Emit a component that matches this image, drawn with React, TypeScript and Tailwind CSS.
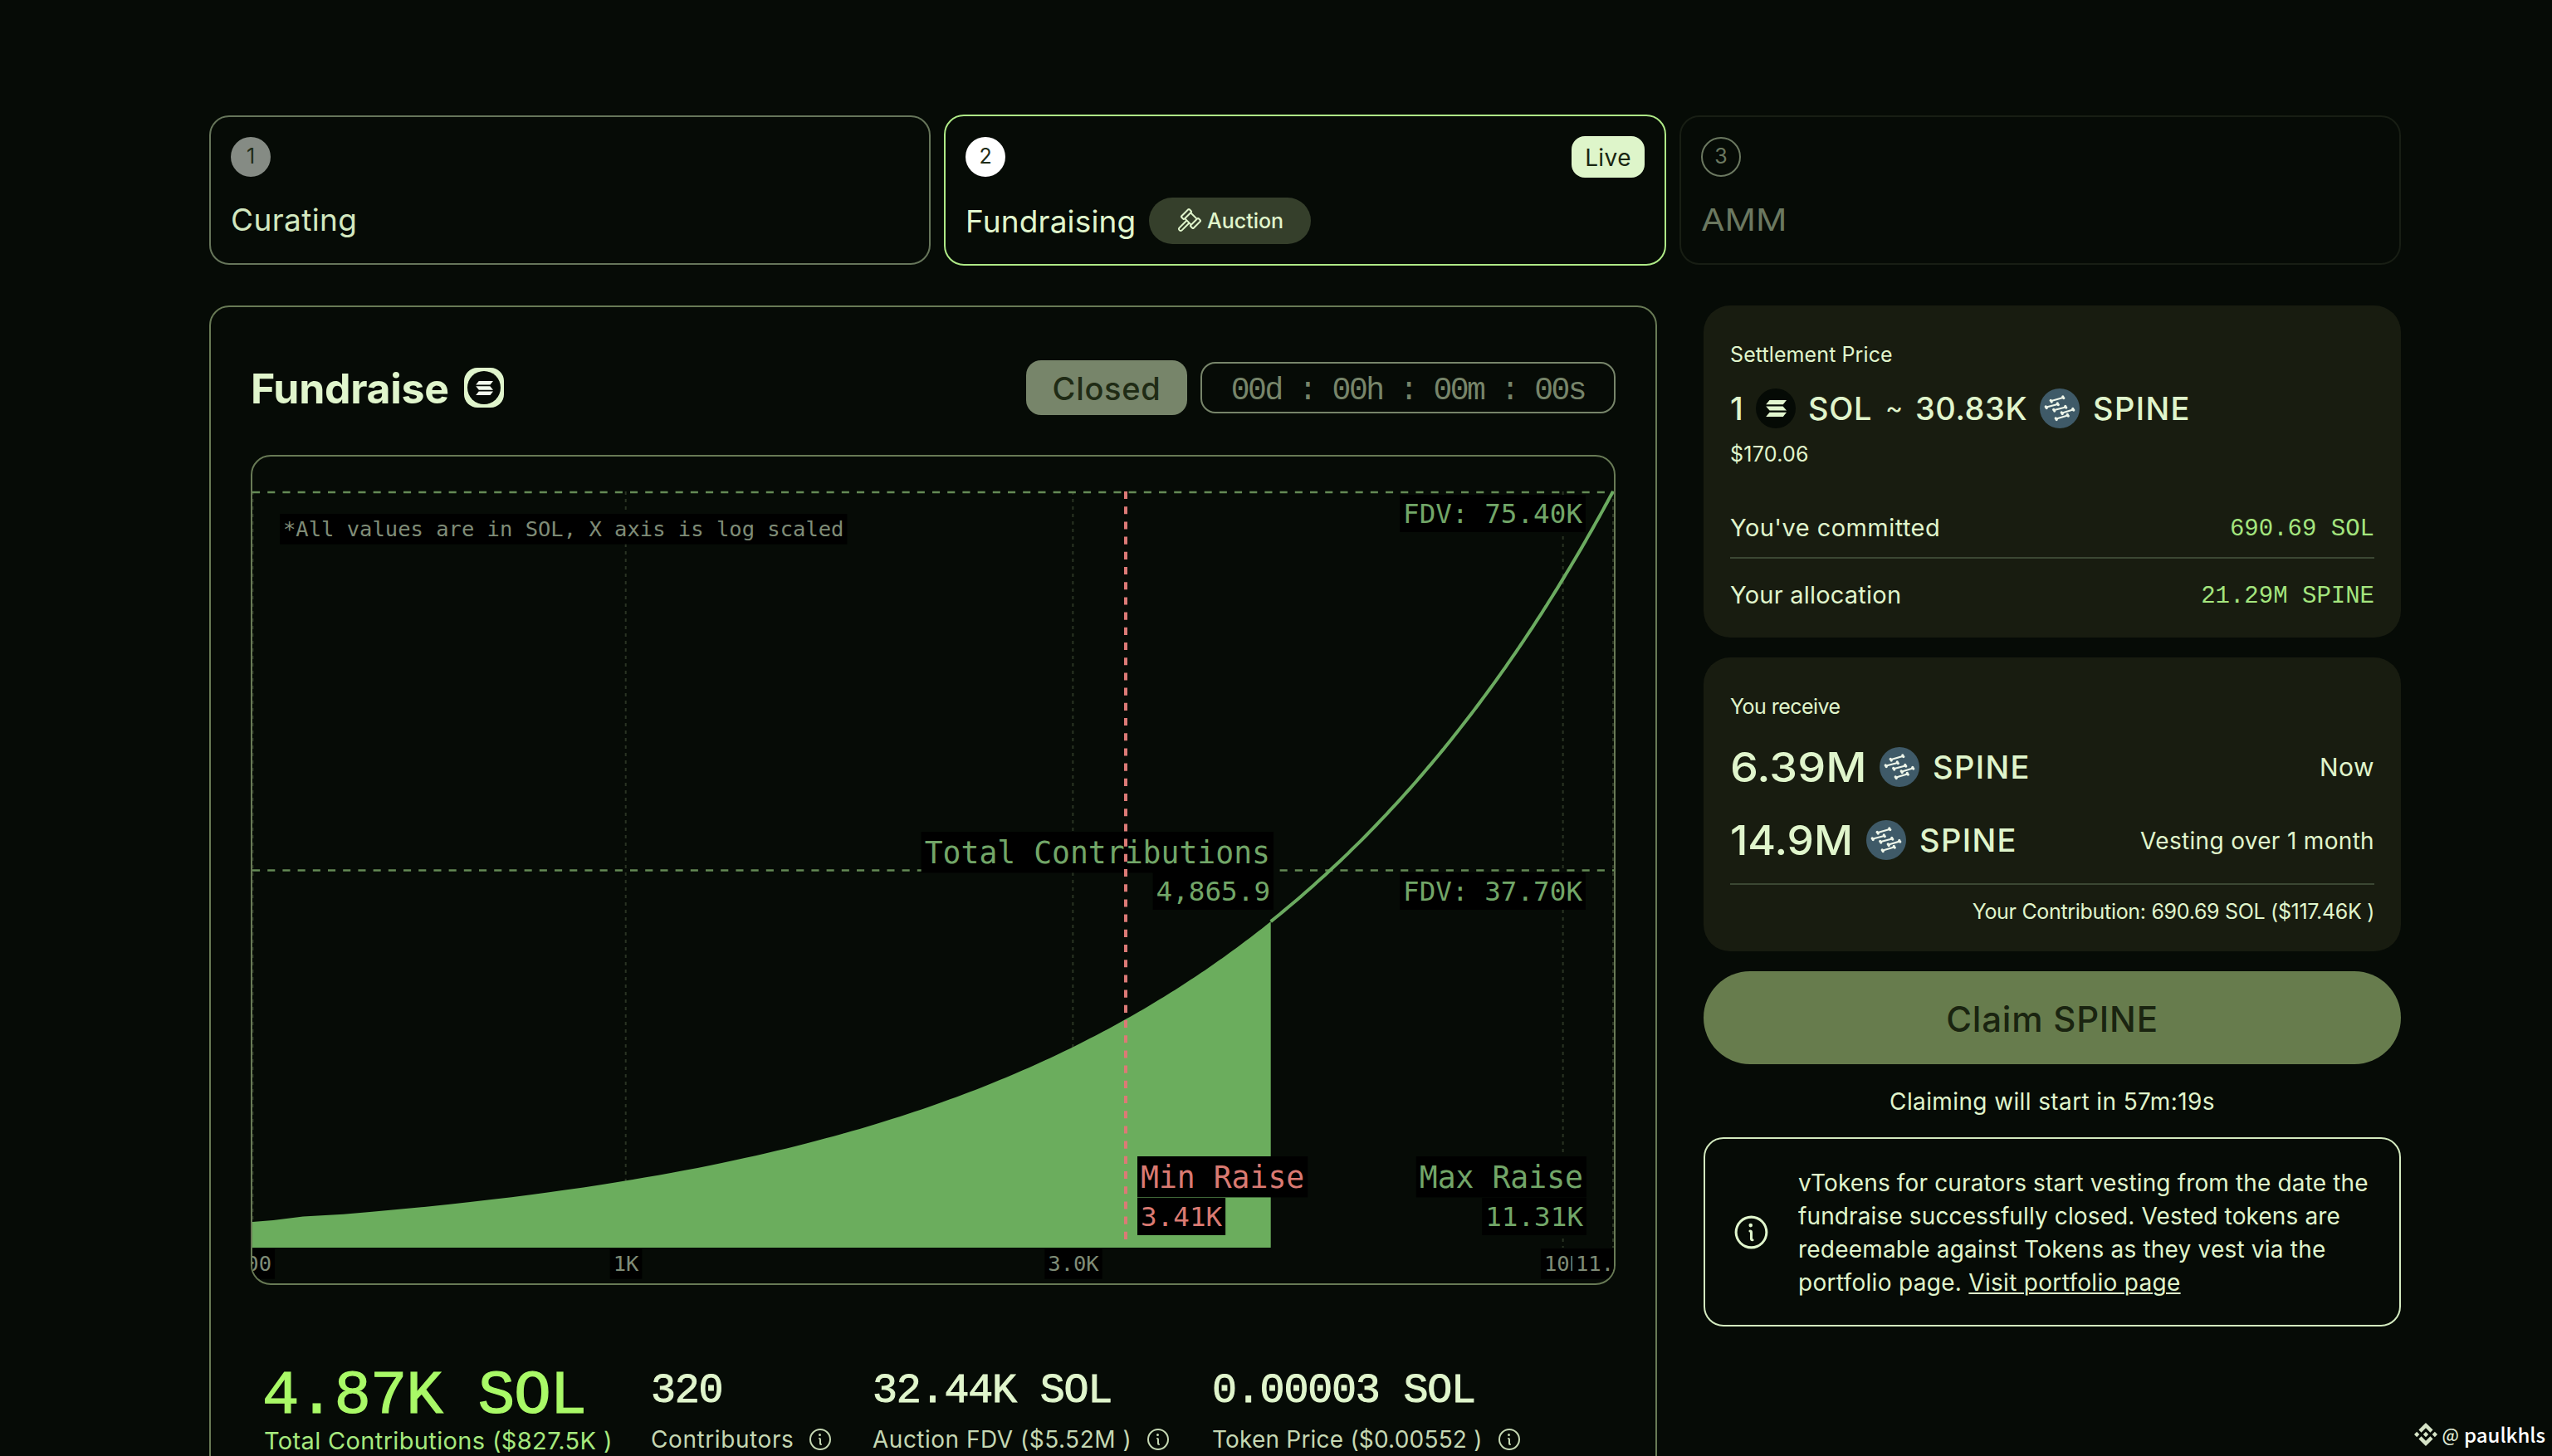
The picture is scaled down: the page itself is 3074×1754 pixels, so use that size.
import type { ReactNode } from 'react';
import { PiGavel, PiInfo } from 'react-icons/pi';
import { SiBinance } from 'react-icons/si';

const MONO = "font-['Liberation_Mono',monospace]";

function SolMark({ className, fill }: { className?: string; fill: string }) {
  return (
    <svg viewBox="0 0 25 20" className={className} fill={fill}>
      <path d="M4.5 0H25l-4.2 5.2H0.2z" />
      <path d="M0.2 7.4h20.4L25 12.6H4.6z" />
      <path d="M4.5 14.8H25L20.8 20H0.2z" />
    </svg>
  );
}

function SolToken() {
  return (
    <span className="flex size-12 shrink-0 items-center justify-center rounded-full bg-[#050a05]">
      <SolMark className="h-5 w-[25px]" fill="#e2f6cf" />
    </span>
  );
}

const BONES = [
  [14, 15, 28, 11],
  [8, 22.5, 21.5, 19],
  [17.5, 26, 31, 22.5],
  [27, 29.5, 40, 25.5],
  [20, 36.5, 33.5, 32.5],
];

function SpineToken() {
  return (
    <svg viewBox="0 0 48 48" className="size-12 shrink-0">
      <circle cx="24" cy="24" r="24" fill="#3f5a68" />
      <g fill="#eef6ea" stroke="#eef6ea">
        {BONES.map(([x1, y1, x2, y2]) => (
          <g key={y1}>
            <line x1={x1} y1={y1} x2={x2} y2={y2} strokeWidth="2.2" />
            <g stroke="none">
              <circle cx={x1 - 0.8} cy={y1 - 0.6} r="1.6" />
              <circle cx={x1 + 0.2} cy={y1 + 1.1} r="1.6" />
              <circle cx={x2 - 0.2} cy={y2 - 1.1} r="1.6" />
              <circle cx={x2 + 0.8} cy={y2 + 0.6} r="1.6" />
            </g>
          </g>
        ))}
      </g>
    </svg>
  );
}

function Steps() {
  return (
    <div className="flex items-center gap-4">
      <div className="flex h-[180px] w-[869px] flex-col gap-6 rounded-3xl border-2 border-[#66755a] p-6">
        <span className="flex size-12 items-center justify-center rounded-full bg-[#858b84] text-[25px] text-[#1f2c17]">1</span>
        <div className="flex h-14 items-center text-[37px] tracking-[0.4px] text-[#d3e8c0]">Curating</div>
      </div>
      <div className="flex h-[182px] w-[870px] flex-col gap-6 rounded-3xl border-2 border-[#aee986] p-6">
        <div className="flex h-[50px] items-center justify-between">
          <span className="flex size-12 items-center justify-center rounded-full bg-white text-[25px] text-[#1f2c17]">2</span>
          <span className="flex h-[50px] w-[88px] items-center justify-center rounded-2xl bg-[#def5ca] pt-0.5 text-[28px] tracking-[0.4px] text-[#1a2612]">
            Live
          </span>
        </div>
        <div className="flex h-14 items-center">
          <span className="w-[221px] pt-0.5 text-[37px] tracking-[0.15px] text-[#e0f5cc]">Fundraising</span>
          <span className="flex h-14 w-[195px] items-center rounded-full bg-[#353f2b] pl-8 text-[25px] font-medium text-[#e0f5cc]">
            <PiGavel className="mr-1.5 size-8" />
            <span className="pt-0.5">Auction</span>
          </span>
        </div>
      </div>
      <div className="flex h-[180px] w-[869px] flex-col gap-6 rounded-3xl border-2 border-[#181e14] p-6">
        <span className="flex size-12 items-center justify-center rounded-full border-2 border-[#6b7860] text-[25px] text-[#6b7860]">3</span>
        <div className="flex h-14 items-center text-[#6b7860]">
          <span className="origin-left scale-x-[1.12] text-[37px]">AMM</span>
        </div>
      </div>
    </div>
  );
}

// The chart is 1640 x 996 inside its border. X is log scaled, Y is linear.
const W = 1640;
const TOP = 42;
const BASE = 953;
const MAX = 11.31;
const RAISED = 4.878;
const xOf = (v: number) => 449.7 + 490.3 * Math.log(v);
const yOf = (v: number) => BASE - ((BASE - TOP) / MAX) * v;

function curve(from: number, to: number) {
  const pts: string[] = [];
  for (let i = 0; i <= 120; i++) {
    const v = from + ((to - from) * i) / 120;
    pts.push(`${xOf(v).toFixed(1)},${yOf(v).toFixed(1)}`);
  }
  return pts.join(' L');
}

type LabelProps = {
  x: number;
  y: number;
  text: string;
  size?: number;
  anchor?: 'start' | 'middle' | 'end';
  fill?: string;
};

// Text on a black plate; x and y are the plate's corner (or top middle)
function Label({ x, y, text, size = 32.6, anchor = 'start', fill = '#72a668' }: LabelProps) {
  const inner = text.length * size * 0.602;
  const w = inner + 8;
  const h = size * 1.165 + 7;
  const left = anchor === 'start' ? x : anchor === 'end' ? x - w : x - w / 2;
  return (
    <g>
      <rect x={left} y={y} width={w} height={h} fill="#000" />
      <text x={left + 4} y={y + size * 0.95 + 3} fontSize={size} fill={fill} textLength={inner} xmlSpace="preserve">
        {text}
      </text>
    </g>
  );
}

function Chart() {
  const grid = [0.4, 1, 3, 10, MAX];
  return (
    <div className="mt-12 h-[1000px] w-full overflow-hidden rounded-3xl border-2 border-[#687a55]">
      <svg viewBox="0 0 1640 996" className="block h-[996px] w-[1640px] font-['DejaVu_Sans_Mono',monospace]">
        {grid.map((v) => (
          <line key={v} x1={xOf(v)} x2={xOf(v)} y1={TOP} y2={BASE} stroke="#2a3423" strokeWidth="2" strokeDasharray="4 5" />
        ))}
        {[TOP, (TOP + BASE) / 2].map((y) => (
          <line key={y} x1="0" x2={W} y1={y + 1} y2={y + 1} stroke="#648a55" strokeWidth="2.5" strokeDasharray="9.1 9.1" />
        ))}
        <path d={`M${curve(RAISED, MAX)}`} fill="none" stroke="#6bab60" strokeWidth="4" />
        <path d={`M0,922 L25,920 L61,915.5 L${curve(0.5, RAISED)} V${BASE} H0 Z`} fill="#6bad5d" />

        <Label x={33} y={69} text="*All values are in SOL, X axis is log scaled" size={25.5} fill="#7f8c77" />
        <Label x={1606} y={46} text="FDV: 75.40K" anchor="end" />
        <Label x={1606} y={501} text="FDV: 37.70K" anchor="end" />
        <Label x={1230} y={452} text="Total Contributions" size={36.4} anchor="end" />
        <Label x={1230} y={501} text="4,865.9" anchor="end" />
        <Label x={1066} y={843} text="Min Raise" size={36.4} fill="#da7a72" />
        <Label x={1066} y={893} text="3.41K" fill="#da7a72" />
        <Label x={1607} y={843} text="Max Raise" size={36.4} anchor="end" />
        <Label x={1607} y={893} text="11.31K" anchor="end" />

        <line x1="1052" x2="1052" y1={TOP} y2="945" stroke="#dc7a76" strokeWidth="4" strokeDasharray="9.1 9.1" />

        <Label x={0} y={954} text="400" size={25.5} anchor="middle" fill="#7f8c77" />
        <Label x={450} y={954} text="1K" size={25.5} anchor="middle" fill="#7f8c77" />
        <Label x={989} y={954} text="3.0K" size={25.5} anchor="middle" fill="#7f8c77" />
        <Label x={1579} y={954} text="10K" size={25.5} anchor="middle" fill="#7f8c77" />
        <Label x={1640} y={954} text="11.31K" size={25.5} anchor="middle" fill="#7f8c77" />
      </svg>
    </div>
  );
}

function Stat({ value, children, className }: { value: string; children: ReactNode; className: string }) {
  return (
    <div className={className}>
      <div className={`${MONO} whitespace-pre text-[50px] leading-[60px] tracking-[-1.2px] text-[#e0f5cc] [-webkit-text-stroke:1px_#e0f5cc]`}>
        {value}
      </div>
      <div className="mt-2.5 flex items-center gap-4 whitespace-nowrap text-[28px] leading-[36px] text-[#c5d8b3]">
        {children}
        <PiInfo className="size-8" />
      </div>
    </div>
  );
}

function FundraisePanel() {
  return (
    <div className="h-[1500px] w-[1744px] rounded-3xl border-2 border-[#687a55] px-12 pt-16">
      <div className="flex h-[66px] items-center">
        <span className="w-[257px] pt-0.5 text-[50px] font-bold tracking-[-0.3px] text-[#e0f5cc]">Fundraise</span>
        <span className="flex size-12 items-center justify-center rounded-[16px] bg-[#e0f5cc]">
          <span className="flex size-10 items-center justify-center rounded-full bg-[#060b06]">
            <SolMark className="h-[17px] w-[21px]" fill="#f4fbee" />
          </span>
        </span>
        <span className="ml-auto flex h-[66px] w-[194px] items-center justify-center rounded-[18px] bg-[#77856a] pt-0.5 text-[38px] font-medium tracking-[0.7px] text-[#1f2b15]">
          Closed
        </span>
        <span className={`${MONO} ml-4 flex h-[62px] w-[500px] items-center justify-center rounded-[18px] border-2 border-[#77856a] pt-1.5 text-[38px] tracking-[-2.5px] whitespace-pre text-[#77856a]`}>
          00d : 00h : 00m : 00s
        </span>
      </div>

      <Chart />

      <div className="mt-[98px] flex pl-4">
        <div className="w-[466px]">
          <div className={`${MONO} -ml-0.5 whitespace-pre text-[74px] leading-[73px] tracking-[-1.1px] text-[#a9f967] [-webkit-text-stroke:1.2px_#a9f967]`}>
            4.87K SOL
          </div>
          <div className="text-[29px] leading-[34px] tracking-[0.35px] whitespace-nowrap text-[#a6e97e]">
            Total Contributions ($827.5K )
          </div>
        </div>
        <Stat value="320" className="w-[267px]">
          <span className="tracking-[0.58px]">Contributors</span>
        </Stat>
        <Stat value="32.44K SOL" className="w-[409px]">
          <span className="tracking-[0.5px]">Auction FDV ($5.52M )</span>
        </Stat>
        <Stat value="0.00003 SOL" className="w-[400px]">
          <span className="tracking-[0.2px]">Token Price ($0.00552 )</span>
        </Stat>
      </div>
    </div>
  );
}

function SettlementCard() {
  return (
    <div className="h-[400px] rounded-[32px] bg-[#181c10] px-8 pt-[42px]">
      <div className="text-[25px] leading-[34px] tracking-[0.1px]">Settlement Price</div>
      <div className="mt-6 flex h-12 items-center text-[38px] font-medium">
        <span className="w-[31px]">1</span>
        <SolToken />
        <span className="ml-[15px] w-[93px] tracking-[0.66px]">SOL</span>
        <span className="w-9 text-[32px] font-normal">~</span>
        <span className="w-[150px] tracking-[0.55px]">30.83K</span>
        <SpineToken />
        <span className="ml-4 tracking-[1.4px]">SPINE</span>
      </div>
      <div className="mt-3.5 text-[25px] leading-[34px] tracking-[0.26px]">$170.06</div>
      <div className="mt-[37px] flex h-[72px] items-center justify-between border-b-2 border-[#3b4733]">
        <span className="text-[29px] tracking-[0.45px]">You've committed</span>
        <span className={`${MONO} pt-1 text-[29px] text-[#a4e57e]`}>690.69 SOL</span>
      </div>
      <div className="flex h-[88px] items-center justify-between">
        <span className="text-[29px] tracking-[0.22px]">Your allocation</span>
        <span className={`${MONO} pt-1 text-[29px] text-[#a4e57e]`}>21.29M SPINE</span>
      </div>
    </div>
  );
}

function ReceiveCard() {
  return (
    <div className="mt-6 h-[354px] rounded-[32px] bg-[#181c10] px-8 pt-[42px]">
      <div className="text-[25px] leading-[34px] tracking-[-0.54px]">You receive</div>
      <div className="mt-8 flex h-12 items-center font-medium">
        <span className="w-[180px]">
          <span className="inline-block origin-left scale-x-[1.08] text-[50px]">6.39M</span>
        </span>
        <SpineToken />
        <span className="ml-4 text-[38px] tracking-[1.4px]">SPINE</span>
        <span className="ml-auto text-[30px] font-normal tracking-[0.5px]">Now</span>
      </div>
      <div className="mt-10 flex h-12 items-center font-medium">
        <span className="w-[164px]">
          <span className="inline-block origin-left scale-x-[1.03] text-[50px]">14.9M</span>
        </span>
        <SpineToken />
        <span className="ml-4 text-[38px] tracking-[1.4px]">SPINE</span>
        <span className="ml-auto pt-0.5 text-[28px] font-normal tracking-[0.32px]">Vesting over 1 month</span>
      </div>
      <div className="mt-7 border-t-2 border-[#3b4733] pt-[15px] text-right text-[25px] leading-[34px] tracking-[-0.31px]">
        Your Contribution: 690.69 SOL ($117.46K )
      </div>
    </div>
  );
}

function VestingNote() {
  return (
    <div className="mt-[25px] flex h-[228px] items-center rounded-3xl border-2 border-[#d3eabf] pl-[31px]">
      <PiInfo className="size-[49px] shrink-0" />
      <div className="ml-8 pt-0.5 text-[28px] leading-[40px] whitespace-nowrap">
        <div className="tracking-[0.14px]">vTokens for curators start vesting from the date the</div>
        <div className="tracking-[0.12px]">fundraise successfully closed. Vested tokens are</div>
        <div className="tracking-[0.2px]">redeemable against Tokens as they vest via the</div>
        <div className="tracking-[0.3px]">
          portfolio page. <a className="underline decoration-2 underline-offset-2">Visit portfolio page</a>
        </div>
      </div>
    </div>
  );
}

export default function App() {
  return (
    <div className="relative h-screen w-full overflow-hidden bg-[#060b06] pt-[138px] pl-[252px] font-[Inter,sans-serif] text-[#e0f5cc]">
      <Steps />
      <div className="mt-12 flex gap-14">
        <FundraisePanel />
        <div className="w-[840px]">
          <SettlementCard />
          <ReceiveCard />
          <button className="mt-6 block h-28 w-full rounded-full bg-[#677c4d] pt-0.5 text-[42px] font-medium tracking-[0.78px] text-[#1a2410]">
            Claim SPINE
          </button>
          <div className="mt-[27px] text-center text-[28px] leading-[36px] tracking-[0.38px]">Claiming will start in 57m:19s</div>
          <VestingNote />
        </div>
      </div>

      {/* Author tag over the page */}
      <div className="absolute right-2 bottom-2 flex h-9 items-center font-['Noto_Sans_CJK_SC',sans-serif] text-[24px] leading-[36px] font-medium text-white">
        <SiBinance className="mr-1.5 size-7 text-[#d5e3c6]" />
        <span className="mr-1.5 text-[21px] text-[#dfe9d4]">@</span>
        paulkhls
      </div>
    </div>
  );
}
